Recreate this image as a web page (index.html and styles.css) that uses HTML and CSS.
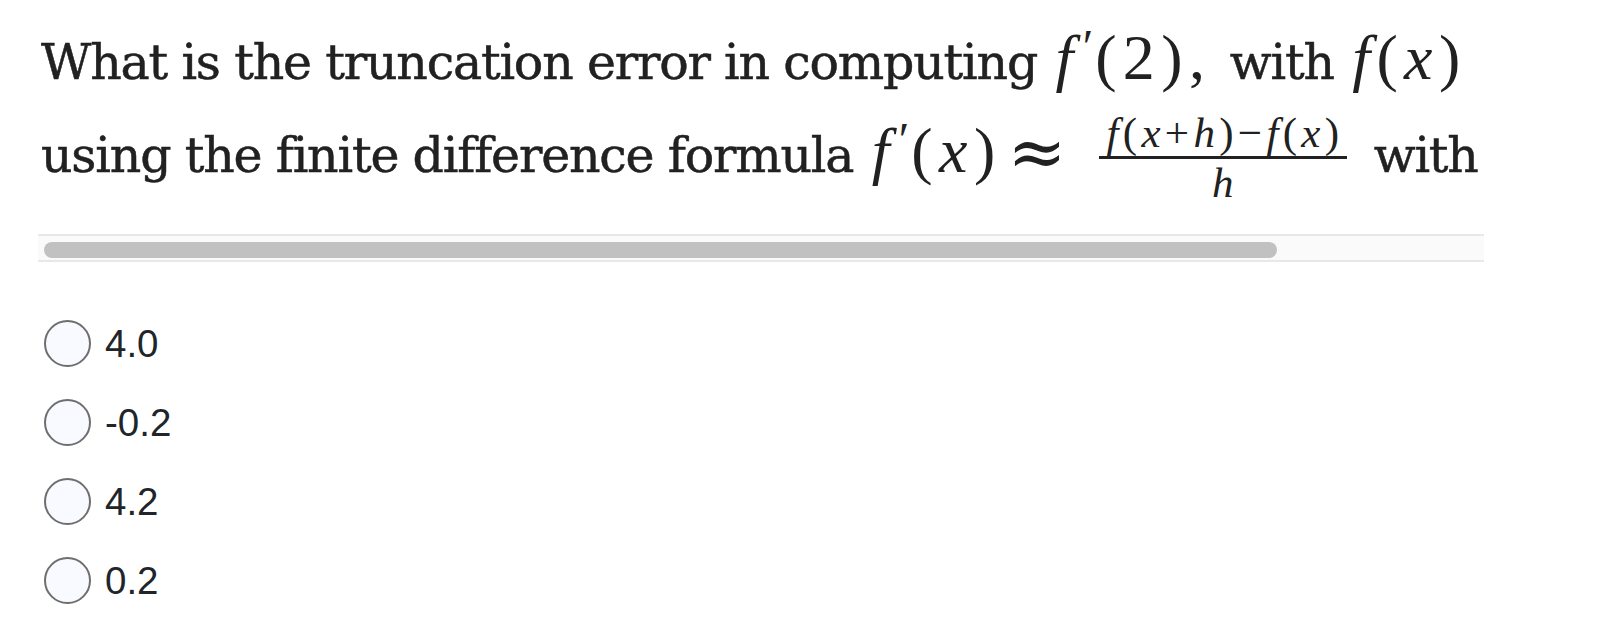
FILE: index.html
```html
<!DOCTYPE html>
<html lang="en">

<head>
    <meta charset="UTF-8">
    <title>Quiz - Finite differences</title>
    <link rel="stylesheet" href="styles.css">
</head>

<body>
    <div class="question">
        <p class="prompt">
            What is the truncation error in computing
            <span class="math"><i>f</i><span class="prime">′</span>(2),</span>
            with
            <span class="math"><i>f</i>(<i>x</i>)</span>
            using the finite difference formula
            <span class="math"><i>f</i><span class="prime">′</span>(<i>x</i>)<span class="rel">≈</span><span class="frac"><span class="num"><i>f</i>(<i>x</i>+<i>h</i>)−<i>f</i>(<i>x</i>)</span><span class="bar"></span><span class="den"><i>h</i></span></span></span>
            with
        </p>

        <!-- overflow strip under the prompt -->
        <div class="scroller">
            <div class="thumb" style="width: 86%"></div>
        </div>

        <ul class="choices">
            <li><label><input type="radio" name="answer" value="a"> 4.0</label></li>
            <li><label><input type="radio" name="answer" value="b"> -0.2</label></li>
            <li><label><input type="radio" name="answer" value="c"> 4.2</label></li>
            <li><label><input type="radio" name="answer" value="d"> 0.2</label></li>
        </ul>
    </div>
</body>

</html>
```

FILE: styles.css
```css
body {
    margin: 0;
    background: #fff;
    color: #212121;
}

.question {
    width: 1446px;
    padding: 16px 0 0 38px;
}

.prompt {
    margin: 0;
    font-family: 'DejaVu Serif', serif;
    font-size: 49px;
    letter-spacing: -1.2px;
    line-height: 93px;
    padding-left: 3px;
    -webkit-text-stroke: 0.5px #212121;
}

.math {
    font-family: 'Liberation Serif', serif;
    font-size: 64px;
    line-height: 1;
    letter-spacing: 0.1em;
    white-space: nowrap;
    margin: 0 4px;
    -webkit-text-stroke: 0;
}

.math i {
    font-style: italic;
}

.prime {
    font-size: 0.75em;
    vertical-align: 0.34em;
    line-height: 0;
    letter-spacing: 0;
    margin: 0 2px 0 3px;
}

.rel {
    font-family: 'DejaVu Serif', serif;
    font-size: 1.1em;
    line-height: 0;
    vertical-align: -0.06em;
    letter-spacing: 0;
    margin: 0 8px 0 6px;
}

.frac {
    display: inline-flex;
    flex-direction: column;
    align-items: center;
    vertical-align: 25px;
    line-height: 1;
    margin: 0 8px 0 24px;
}

.num,
.den {
    font-size: 43px;
    letter-spacing: 0.1em;
    padding: 0 4px 0 8px;
}

.bar {
    align-self: stretch;
    height: 3px;
    background: #212121;
    margin: 2px 0 2px;
}

.scroller {
    margin-top: 30px;
    border-top: 2px solid #e8e8e8;
    border-bottom: 2px solid #e8e8e8;
    background: #fafafa;
    padding: 6px 6px 2px;
}

.thumb {
    height: 16px;
    border-radius: 8px;
    background: #c1c1c1;
}

.choices {
    list-style: none;
    margin: 0;
    padding: 58px 0 0 6px;
    display: flex;
    flex-direction: column;
    gap: 32px;
    font-family: 'Liberation Sans', Arial, sans-serif;
    font-size: 38.5px;
    color: #212529;
}

.choices label {
    display: flex;
    align-items: center;
    gap: 14px;
    height: 47px;
}

.choices input {
    appearance: none;
    margin: 0;
    width: 47px;
    height: 47px;
    border: 2px solid #6e6e6e;
    border-radius: 50%;
    background: #f8faff;
}
```
